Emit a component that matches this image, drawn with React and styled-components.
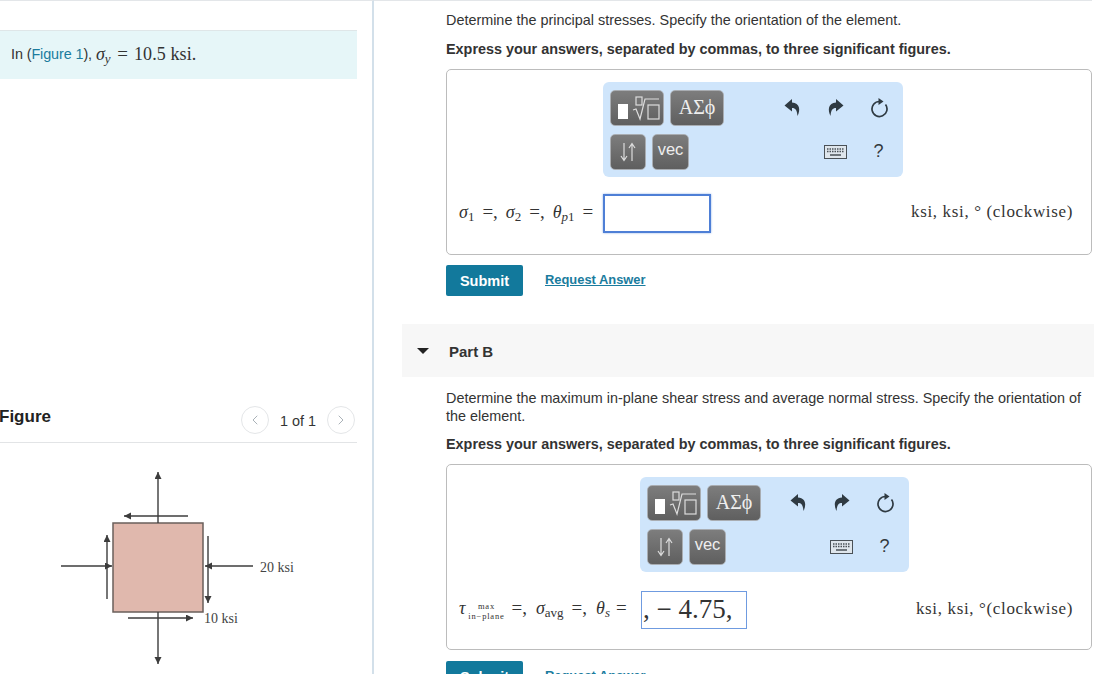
import React from 'react'
import styled, { createGlobalStyle } from 'styled-components'
import { ChevronLeft, ChevronRight } from 'lucide-react'

const fontSans = '"Liberation Sans", Arial, sans-serif'
const fontSerif = '"Liberation Serif", "Times New Roman", serif'

const GlobalStyle = createGlobalStyle`
  html, body {
    margin: 0;
    padding: 0;
    background: #fff;
    overflow: hidden;
  }
`

const Page = styled.div`
  display: flex;
  width: 1120px;
  height: 674px;
  overflow: hidden;
  font-family: ${fontSans};
  color: #333;
`

const LeftPane = styled.div`
  flex: none;
  width: 374px;
  height: 674px;
  box-sizing: border-box;
  padding: 29px 15px 0 0;
  border-top: 1px solid #e3e6e9;
  border-right: 2px solid #d3e0ea;
`

const Prompt = styled.div`
  height: 49px;
  box-sizing: border-box;
  display: flex;
  align-items: center;
  padding: 0 0 2px 11px;
  background: #e6f6f8;
  border-top: 1px solid #dfe6e8;
  font-size: 14.4px;
  letter-spacing: -0.1px;
`

const Link = styled.span`
  color: #1a7c9e;
`

const FigureHead = styled.div`
  display: flex;
  align-items: center;
  justify-content: space-between;
  height: 44px;
  margin-top: 319px;
  border-bottom: 1px solid #e2e4e6;
`

const FigureTitle = styled.h2`
  margin: 0 0 6px -1px;
  font-size: 17px;
  font-weight: 700;
  color: #222;
`

const Pager = styled.div`
  display: flex;
  align-items: center;
  gap: 11px;
  margin-right: 2px;
  font-size: 14.4px;
`

const PagerText = styled.span`
  margin-top: 2px;
`

const PagerButton = styled.span`
  display: flex;
  align-items: center;
  justify-content: center;
  width: 28px;
  height: 28px;
  box-sizing: border-box;
  border: 1px solid #e4e6e8;
  border-radius: 50%;
  color: #aab2b8;
`

const FigureArt = styled.svg`
  display: block;
  width: 355px;
  height: 231px;
`

const RightPane = styled.div`
  flex: none;
  width: 718px;
  box-sizing: border-box;
  padding: 10px 0 0 72px;
  border-top: 1px solid #e3e6e9;
`

const Instruction = styled.p`
  margin: ${p => p.$top || 0}px 0 0;
  width: 646px;
  font-size: 14.4px;
  line-height: 18px;
`

const Strong = styled.p`
  margin: ${p => p.$top}px 0 0;
  font-size: 14.4px;
  line-height: 18px;
  font-weight: 700;
  color: #333;
`

const AnswerBox = styled.div`
  display: flex;
  flex-direction: column;
  align-items: flex-start;
  width: 646px;
  height: 186px;
  box-sizing: border-box;
  margin-top: ${p => p.$top}px;
  padding: 12px 18px 0 12px;
  border: 1px solid #bcbcbc;
  border-radius: 5px;
`

const Toolbar = styled.div`
  display: flex;
  flex-direction: column;
  gap: 7px;
  width: ${p => p.$width}px;
  height: 95px;
  box-sizing: border-box;
  margin-left: ${p => p.$left}px;
  padding: 7px 3px 0 7px;
  background: #cfe5fb;
  border-radius: 6px;
`

const ToolRow = styled.div`
  display: flex;
  align-items: center;
  justify-content: space-between;
  height: 37px;
`

const ButtonGroup = styled.div`
  display: flex;
  gap: 6px;
`

const ToolButton = styled.span`
  display: flex;
  align-items: center;
  justify-content: center;
  width: ${p => p.$width}px;
  height: 36px;
  box-sizing: border-box;
  padding-bottom: ${p => (p.$raised ? 4 : 0)}px;
  border: 1px solid #a9adb2;
  border-radius: 5px;
  background: linear-gradient(#7d7d7d, #5f5f5f);
  color: #eee;
  font-family: ${p => (p.$serif ? fontSerif : fontSans)};
  font-size: ${p => (p.$serif ? 20 : 16.5)}px;
`

const IconGroup = styled.div`
  display: flex;
`

const IconCell = styled.span`
  display: flex;
  align-items: center;
  justify-content: center;
  width: 43px;
  height: 30px;
  font-size: 18px;
  color: #33393d;
`

const MathRow = styled.div`
  display: flex;
  align-items: center;
  align-self: stretch;
  margin-top: ${p => p.$top}px;
`

const MathLabel = styled.div`
  flex: none;
  display: flex;
  align-items: baseline;
  width: ${p => p.$width}px;
  box-sizing: border-box;
  padding-bottom: ${p => (p.$inline ? 0 : 3)}px;
  font-family: ${fontSerif};
  font-size: 18px;
  white-space: pre;
  color: #333;
`

const Var = styled.i`
  font-style: italic;
`

const Sub = styled.span`
  font-size: 13px;
  transform: translateY(3px);
`

const Eq = styled.span`
  margin: 0 ${p => p.$right ?? 8}px 0 ${p => p.$left ?? 8}px;
  font-size: 19px;
  line-height: 1;
`

const Plain = styled.span`
  letter-spacing: 0.1px;
`

const Stack = styled.span`
  display: inline-flex;
  flex-direction: column;
  align-items: center;
  width: 36px;
  margin: 0 0 -10px 3px;
  font-size: 8.5px;
  line-height: 10px;
  letter-spacing: 0.8px;
  transform: translateY(-5px);
`

const SelectedInput = styled.div`
  flex: none;
  width: 108px;
  height: 39px;
  box-sizing: border-box;
  border: 2px solid #4e7fd6;
  box-shadow: 0 0 2px #8fb0e6;
`

const FilledInput = styled.div`
  flex: none;
  width: 106px;
  height: 38px;
  box-sizing: border-box;
  padding-left: 1px;
  border: 1px solid #6f9be0;
  font-family: ${fontSerif};
  font-size: 27px;
  line-height: 34px;
  white-space: nowrap;
  color: #333;
`

const Units = styled.div`
  margin-left: auto;
  padding-bottom: 3px;
  font-family: ${fontSerif};
  font-size: 17px;
  letter-spacing: 0.65px;
  white-space: pre;
  color: #333;
`

const Actions = styled.div`
  display: flex;
  align-items: center;
  gap: 22px;
  margin-top: ${p => p.$top}px;
`

const SubmitButton = styled.button`
  width: 77px;
  height: 31px;
  padding: 0;
  border: 0;
  border-radius: 2px;
  background: #12799c;
  color: #fff;
  font-family: ${fontSans};
  font-size: 14.5px;
  font-weight: 700;
`

const RequestLink = styled.a`
  margin-top: -3px;
  font-size: 12.9px;
  font-weight: 700;
  color: #1a7c9e;
  text-decoration: underline;
`

const PartHeader = styled.div`
  display: flex;
  align-items: center;
  width: 692px;
  height: 53px;
  margin: 28px 0 0 -44px;
  background: #f7f7f7;
`

const Caret = styled.span`
  width: 0;
  height: 0;
  margin: 0 20px 0 15px;
  border-left: 6px solid transparent;
  border-right: 6px solid transparent;
  border-top: 6px solid #222;
`

const PartTitle = styled.h3`
  margin: 2px 0 0;
  font-size: 15px;
  font-weight: 700;
  color: #333;
`

function TemplateIcon() {
  return (
    <svg width="52" height="34" viewBox="1 1 52 34" style={{ flex: 'none' }}>
      <rect x="8" y="14" width="10" height="15" fill="#fff" />
      <rect x="26" y="7" width="6" height="8" fill="none" stroke="#ddd" strokeWidth="1.2" />
      <path d="M23 20l3 -1 4 10 5 -20h14" fill="none" stroke="#ddd" strokeWidth="1.2" />
      <rect x="38" y="15" width="11" height="14" fill="none" stroke="#ddd" strokeWidth="1.2" />
    </svg>
  )
}

function ArrowsIcon() {
  return (
    <svg width="18" height="20" viewBox="0 0 18 20">
      <path d="M5 1v17M2 14l3 4.500 3 -4.500M13 19V2M10 6l3 -4.500 3 4.500" fill="none" stroke="#ddd" strokeWidth="1.200" />
    </svg>
  )
}

function UndoIcon({ flip }) {
  return (
    <svg width="17" height="19" viewBox="0 0 17 19" style={flip ? { transform: 'scaleX(-1)' } : undefined}>
      <path d="M8 1L0.500 7.500 8 13.500V10c3.500 0 5 2 5.500 8 3-6 2.500-13-5.500-13.500z" fill="#2f3a42" />
    </svg>
  )
}

function ResetIcon() {
  return (
    <svg width="20" height="21" viewBox="0 0 20 21">
      <path d="M10.500 4.500a7.500 7.500 0 1 0 6 3" fill="none" stroke="#2f3a42" strokeWidth="1.700" />
      <path d="M9.500 1l5 3.500 -5 3.500z" fill="#2f3a42" />
    </svg>
  )
}

function KeyboardIcon() {
  return (
    <svg width="23" height="14" viewBox="0 0 23 14">
      <rect x="0.500" y="0.500" width="22" height="13" fill="#dfe6ec" stroke="#4a5157" />
      <path d="M3 4h17M3 6.500h17" stroke="#4a5157" strokeWidth="1.500" strokeDasharray="1.500 1" />
      <path d="M6 10h11" stroke="#4a5157" strokeWidth="1.500" />
    </svg>
  )
}

function MathToolbar({ width, left }) {
  return (
    <Toolbar $width={width} $left={left}>
      <ToolRow>
        <ButtonGroup>
          <ToolButton $width={54}><TemplateIcon /></ToolButton>
          <ToolButton $width={54} $serif>ΑΣϕ</ToolButton>
        </ButtonGroup>
        <IconGroup>
          <IconCell><UndoIcon /></IconCell>
          <IconCell><UndoIcon flip /></IconCell>
          <IconCell><ResetIcon /></IconCell>
        </IconGroup>
      </ToolRow>
      <ToolRow>
        <ButtonGroup>
          <ToolButton $width={36}><ArrowsIcon /></ToolButton>
          <ToolButton $width={37} $raised>vec</ToolButton>
        </ButtonGroup>
        <IconGroup>
          <IconCell><KeyboardIcon /></IconCell>
          <IconCell>?</IconCell>
        </IconGroup>
      </ToolRow>
    </Toolbar>
  )
}

function StressElement() {
  const ink = '#3c3c3c'
  return (
    <FigureArt viewBox="0 443 355 231">
      <defs>
        <marker id="head" markerWidth="8" markerHeight="8" refX="7" refY="3.500" orient="auto" markerUnits="userSpaceOnUse">
          <path d="M0 0L7 3.500L0 7z" fill={ink} />
        </marker>
      </defs>
      <rect x="113" y="523" width="90" height="89" fill="#e0b8ad" stroke="#6a5f5b" strokeWidth="1.500" />
      <g stroke={ink} strokeWidth="1.400" fill="none">
        <path d="M158 523V472" markerEnd="url(#head)" />
        <path d="M158 612V664" markerEnd="url(#head)" />
        <path d="M188 516H124" markerEnd="url(#head)" />
        <path d="M128 618H193" markerEnd="url(#head)" />
        <path d="M107 599V535" markerEnd="url(#head)" />
        <path d="M208 536V603" markerEnd="url(#head)" />
        <path d="M61 566H112" markerEnd="url(#head)" />
        <path d="M253 566H205" markerEnd="url(#head)" />
      </g>
      <text x="260" y="572" fontFamily={fontSerif} fontSize="14" fill="#444">20 ksi</text>
      <text x="204" y="623" fontFamily={fontSerif} fontSize="14" fill="#444">10 ksi</text>
    </FigureArt>
  )
}

export default function App() {
  return (
    <>
      <GlobalStyle />
      <Page>
        <LeftPane>
          <Prompt>
            <span>
              In (<Link>Figure 1</Link>),&nbsp;
            </span>
            <MathLabel as="span" $width={110} $inline>
              <Var>σ</Var><Sub><Var>y</Var></Sub><Eq $left={7} $right={6}>=</Eq><Plain>10.5 ksi.</Plain>
            </MathLabel>
          </Prompt>
          <FigureHead>
            <FigureTitle>Figure</FigureTitle>
            <Pager>
              <PagerButton><ChevronLeft size={16} strokeWidth={1.5} /></PagerButton>
              <PagerText>1 of 1</PagerText>
              <PagerButton><ChevronRight size={16} strokeWidth={1.5} /></PagerButton>
            </Pager>
          </FigureHead>
          <StressElement />
        </LeftPane>

        <RightPane>
          <Instruction>Determine the principal stresses. Specify the orientation of the element.</Instruction>
          <Strong $top={11}>Express your answers, separated by commas, to three significant figures.</Strong>
          <AnswerBox $top={11}>
            <MathToolbar width={300} left={144} />
            <MathRow $top={17}>
              <MathLabel $width={144}>
                <Var>σ</Var><Sub>1</Sub><Eq>=,</Eq>
                <Var>σ</Var><Sub>2</Sub><Eq>=,</Eq>
                <Var>θ</Var><Sub><Var>p</Var>1</Sub><Eq $right={0}>=</Eq>
              </MathLabel>
              <SelectedInput />
              <Units>ksi, ksi, ° (clockwise)</Units>
            </MathRow>
          </AnswerBox>
          <Actions $top={10}>
            <SubmitButton>Submit</SubmitButton>
            <RequestLink>Request Answer</RequestLink>
          </Actions>

          <PartHeader>
            <Caret />
            <PartTitle>Part B</PartTitle>
          </PartHeader>

          <Instruction $top={12}>
            Determine the maximum in-plane shear stress and average normal stress. Specify the orientation of the element.
          </Instruction>
          <Strong $top={10}>Express your answers, separated by commas, to three significant figures.</Strong>
          <AnswerBox $top={11}>
            <MathToolbar width={269} left={181} />
            <MathRow $top={19}>
              <MathLabel $width={182}>
                <Var>τ</Var>
                <Stack><span>max</span><span>in−plane</span></Stack>
                <Eq $left={7} $right={9}>=,</Eq>
                <Var>σ</Var><Sub>avg</Sub><Eq $left={8} $right={9}>=,</Eq>
                <Var>θ</Var><Sub><Var>s</Var></Sub><Eq $left={6} $right={0}>=</Eq>
              </MathLabel>
              <FilledInput>, − 4.75,</FilledInput>
              <Units>ksi, ksi, °(clockwise)</Units>
            </MathRow>
          </AnswerBox>
          <Actions $top={11}>
            <SubmitButton>Submit</SubmitButton>
            <RequestLink>Request Answer</RequestLink>
          </Actions>
        </RightPane>
      </Page>
    </>
  )
}
